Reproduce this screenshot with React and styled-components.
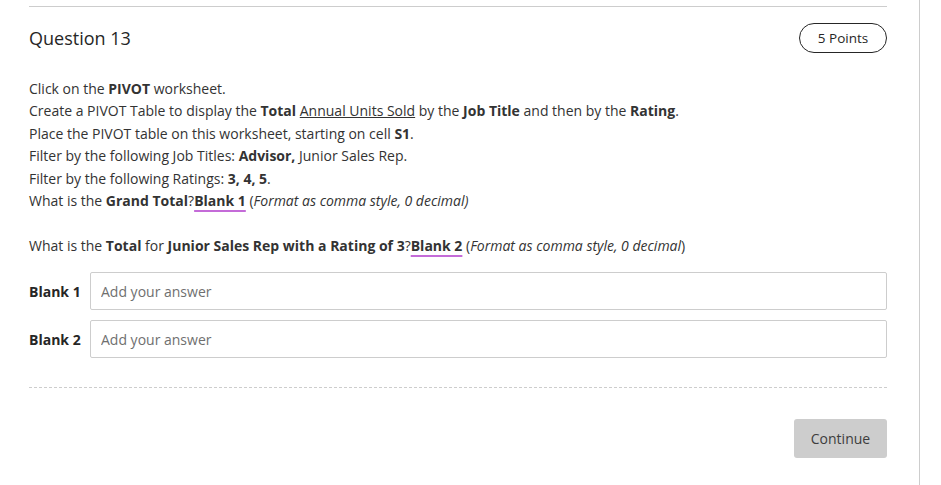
import styled, { createGlobalStyle } from "styled-components"

const GlobalStyle = createGlobalStyle`
  html, body {
    margin: 0;
    padding: 0;
    background: #fff;
  }
  body {
    font-family: "Open Sans", "Liberation Sans", sans-serif;
    color: #333;
  }
`

const Page = styled.div`
  width: 920px;
  min-height: 485px;
  border-right: 1px solid #cdcdcd;
  box-sizing: border-box;
  padding: 6px 32px 0 29px;
`

const Header = styled.div`
  display: flex;
  justify-content: space-between;
  align-items: center;
  border-top: 1px solid #cdcdcd;
  padding-top: 16px;
  height: 30px;
`

const Title = styled.h2`
  margin: 0;
  font-size: 18px;
  font-weight: 400;
  color: #262626;
`

const Points = styled.span`
  display: inline-flex;
  align-items: center;
  justify-content: center;
  width: 88px;
  height: 30px;
  box-sizing: border-box;
  border: 1px solid #262626;
  border-radius: 15px;
  font-size: 13.5px;
  color: #262626;
`

const Body = styled.div`
  margin-top: 25px;
  font-size: 14px;
  line-height: 22.4px;
`

const Line = styled.div`
  min-height: 22.4px;
`

const Blank = styled.b`
  text-decoration: underline;
  text-decoration-color: #c46bd8;
  text-decoration-thickness: 2px;
  text-underline-offset: 4px;
`

const Answers = styled.div`
  display: flex;
  flex-direction: column;
  gap: 10px;
  margin-top: 15px;
`

const AnswerRow = styled.label`
  display: flex;
  align-items: center;
  gap: 10px;
  font-size: 14px;
  font-weight: 700;
  color: #262626;
`

const LabelText = styled.span`
  width: 51px;
  white-space: nowrap;
`

const Input = styled.input`
  flex: 1;
  height: 38px;
  box-sizing: border-box;
  border: 1px solid #cdcdcd;
  border-radius: 2px;
  padding: 0 10px;
  font-family: inherit;
  font-size: 14px;
  color: #333;
  &::placeholder {
    color: #6f6f6f;
  }
`

const Divider = styled.hr`
  margin: 29px 0 0;
  border: none;
  border-top: 1px dashed #cdcdcd;
`

const Footer = styled.div`
  display: flex;
  justify-content: flex-end;
  margin-top: 31px;
`

const Button = styled.button`
  width: 93px;
  height: 39px;
  border: none;
  border-radius: 3px;
  background: #cdcdcd;
  color: #3d3d3d;
  font-family: inherit;
  font-size: 14px;
`

const App = () => {
  return (
    <Page>
      <GlobalStyle />
      <Header>
        <Title>Question 13</Title>
        <Points>5 Points</Points>
      </Header>
      <Body>
        <Line>Click on the <b>PIVOT</b> worksheet.</Line>
        <Line>
          Create a PIVOT Table to display the <b>Total</b> <u>Annual Units Sold</u> by
          the <b>Job Title</b> and then by the <b>Rating</b>.
        </Line>
        <Line>Place the PIVOT table on this worksheet, starting on cell <b>S1</b>.</Line>
        <Line>Filter by the following Job Titles: <b>Advisor,</b> Junior Sales Rep.</Line>
        <Line>Filter by the following Ratings: <b>3, 4, 5</b>.</Line>
        <Line>
          What is the <b>Grand Total</b>?<Blank>Blank 1</Blank> (<i>Format as comma style, 0 decimal)</i>
        </Line>
        <Line />
        <Line>
          What is the <b>Total</b> for <b>Junior Sales Rep with a Rating of 3</b>?<Blank>Blank 2</Blank> (
          <i>Format as comma style, 0 decimal</i>)
        </Line>
      </Body>
      <Answers>
        <AnswerRow>
          <LabelText>Blank 1</LabelText>
          <Input placeholder="Add your answer" />
        </AnswerRow>
        <AnswerRow>
          <LabelText>Blank 2</LabelText>
          <Input placeholder="Add your answer" />
        </AnswerRow>
      </Answers>
      <Divider />
      <Footer>
        <Button>Continue</Button>
      </Footer>
    </Page>
  )
}

export default App
